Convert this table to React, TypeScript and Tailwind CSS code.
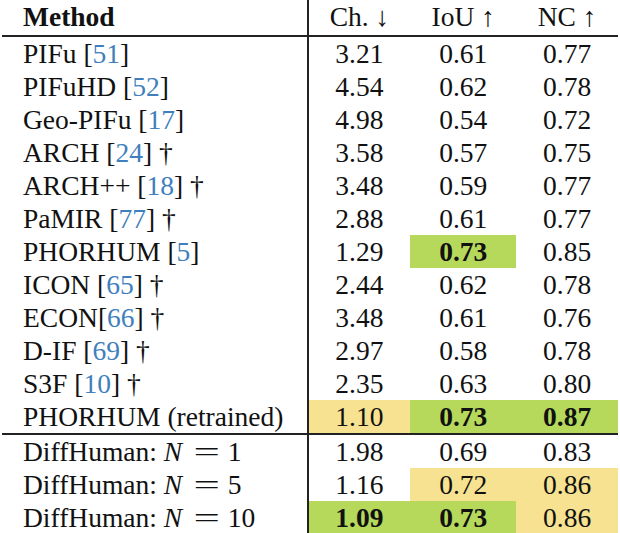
type Cell = { v: string; hl?: 'g' | 'y' }
type Row = { name: React.ReactNode; cells: Cell[] }

const Cite = ({ n }: { n: number }) => (
  <>
    [<span className="text-[#3f7fbd]">{n}</span>]
  </>
)

const NEq = ({ n }: { n: number }) => (
  <>
    DiffHuman: <i className="mr-[4px]">N</i>
    <span className="inline-block mx-[13px] scale-x-[1.7]">=</span>
    {n}
  </>
)

const top: Row[] = [
  { name: <>PIFu <Cite n={51} /></>, cells: [{ v: '3.21' }, { v: '0.61' }, { v: '0.77' }] },
  { name: <>PIFuHD <Cite n={52} /></>, cells: [{ v: '4.54' }, { v: '0.62' }, { v: '0.78' }] },
  { name: <>Geo-PIFu <Cite n={17} /></>, cells: [{ v: '4.98' }, { v: '0.54' }, { v: '0.72' }] },
  { name: <>ARCH <Cite n={24} /> †</>, cells: [{ v: '3.58' }, { v: '0.57' }, { v: '0.75' }] },
  { name: <>ARCH++ <Cite n={18} /> †</>, cells: [{ v: '3.48' }, { v: '0.59' }, { v: '0.77' }] },
  { name: <>PaMIR <Cite n={77} /> †</>, cells: [{ v: '2.88' }, { v: '0.61' }, { v: '0.77' }] },
  { name: <>PHORHUM <Cite n={5} /></>, cells: [{ v: '1.29' }, { v: '0.73', hl: 'g' }, { v: '0.85' }] },
  { name: <>ICON <Cite n={65} /> †</>, cells: [{ v: '2.44' }, { v: '0.62' }, { v: '0.78' }] },
  { name: <>ECON<Cite n={66} /> †</>, cells: [{ v: '3.48' }, { v: '0.61' }, { v: '0.76' }] },
  { name: <>D-IF <Cite n={69} /> †</>, cells: [{ v: '2.97' }, { v: '0.58' }, { v: '0.78' }] },
  { name: <>S3F <Cite n={10} /> †</>, cells: [{ v: '2.35' }, { v: '0.63' }, { v: '0.80' }] },
  {
    name: <>PHORHUM (retrained)</>,
    cells: [{ v: '1.10', hl: 'y' }, { v: '0.73', hl: 'g' }, { v: '0.87', hl: 'g' }],
  },
]

const bottom: Row[] = [
  { name: <NEq n={1} />, cells: [{ v: '1.98' }, { v: '0.69' }, { v: '0.83' }] },
  { name: <NEq n={5} />, cells: [{ v: '1.16' }, { v: '0.72', hl: 'y' }, { v: '0.86', hl: 'y' }] },
  { name: <NEq n={10} />, cells: [{ v: '1.09', hl: 'g' }, { v: '0.73', hl: 'g' }, { v: '0.86', hl: 'y' }] },
]

const colW = ['w-[102px]', 'w-[106px]', 'w-[102px]']

function TableRow({ row }: { row: Row }) {
  return (
    <div className="flex h-[33px] leading-[33px]">
      <div className="w-[307px] border-r-2 border-[#222] pl-[21px] whitespace-nowrap">{row.name}</div>
      {row.cells.map((c, i) => (
        <div
          key={i}
          className={`${colW[i]} text-center ${
            c.hl === 'g' ? 'bg-[#b6d95c] font-bold' : c.hl === 'y' ? 'bg-[#f6e290]' : ''
          }`}
        >
          {c.v}
        </div>
      ))}
    </div>
  )
}

export default function App() {
  return (
    <div className="h-[533px] w-[620px] bg-white text-[#111] text-[27.5px] font-['Liberation_Serif',serif]">
      <div className="ml-[2px] w-[616px]">
        <div className="flex h-[35px] leading-[33px]">
          <div className="w-[307px] border-r-2 border-[#222] pl-[21px] font-bold">Method</div>
          <div className="w-[102px] text-center">Ch. ↓</div>
          <div className="w-[106px] text-center">IoU ↑</div>
          <div className="w-[102px] text-center">NC ↑</div>
        </div>
        <div className="h-[2px] bg-[#222]" />
        {top.map((r, i) => (
          <TableRow key={i} row={r} />
        ))}
        <div className="h-[2px] bg-[#222]" />
        {bottom.map((r, i) => (
          <TableRow key={i} row={r} />
        ))}
      </div>
    </div>
  )
}
